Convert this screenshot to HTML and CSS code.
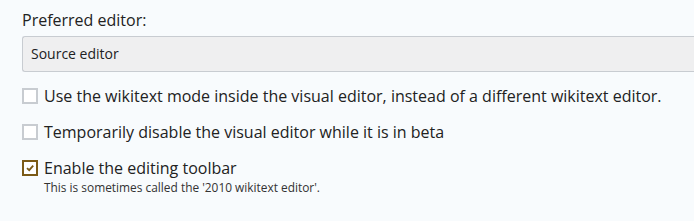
FILE: index.html
```html
<!DOCTYPE html>
<html>
<head>
<meta charset="utf-8">
<link rel="stylesheet" href="styles.css">
</head>
<body>
<div class="prefs">
  <div class="field">
    <div class="label">Preferred editor:</div>
    <div class="select">Source editor</div>
  </div>
  <div class="check-row">
    <span class="box"></span>
    <span class="text">Use the wikitext mode inside the visual editor, instead of a different wikitext editor.</span>
  </div>
  <div class="check-row">
    <span class="box"></span>
    <span class="text">Temporarily disable the visual editor while it is in beta</span>
  </div>
  <div class="check-row checked">
    <span class="box"><svg width="12" height="12" viewBox="0 0 12 12"><path d="M3 6.2 L5.2 8.2 L9.2 3.6" fill="none" stroke="#7b5a16" stroke-width="1.8"/></svg></span>
    <div class="text-col">
      <span class="text">Enable the editing toolbar</span>
      <span class="help">This is sometimes called the '2010 wikitext editor'.</span>
    </div>
  </div>
</div>
</body>
</html>
```
FILE: styles.css
```css
html, body {
  margin: 0;
  background: #f8fbfd;
}
body {
  font-family: "Open Sans", sans-serif;
  color: #202122;
}
.prefs {
  padding: 9px 0 0 22px;
  display: flex;
  flex-direction: column;
}
.label {
  font-size: 16px;
  line-height: 22px;
  color: #222;
  height: 27px;
}
.select {
  height: 36px;
  box-sizing: border-box;
  border: 1px solid #c8ccd1;
  border-right: none;
  border-radius: 3px 0 0 3px;
  background: #efeff0;
  font-size: 14px;
  line-height: 34px;
  padding-left: 8px;
  color: #202122;
}
.check-row {
  display: flex;
  align-items: flex-start;
  gap: 6px;
  margin-top: 16px;
}
.field + .check-row { margin-top: 14px; }
.box {
  width: 16px;
  height: 16px;
  box-sizing: border-box;
  border: 2px solid #c8ccd1;
  background: #fff;
  margin-top: 2px;
  flex: none;
  display: flex;
  align-items: center;
  justify-content: center;
}
.checked .box {
  border-color: #7b5a16;
}
.text {
  font-size: 16px;
  line-height: 20px;
  color: #222;
}
.text-col {
  display: flex;
  flex-direction: column;
}
.help {
  font-size: 11.9px;
  line-height: 18px;
  color: #333;
}
```
